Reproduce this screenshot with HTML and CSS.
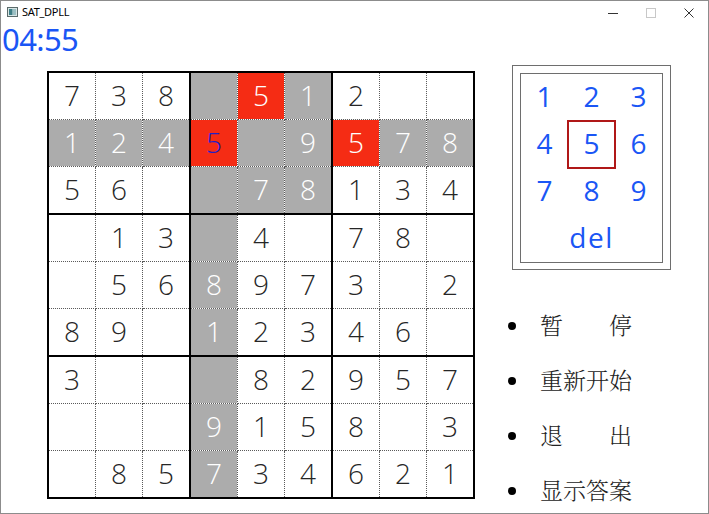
FILE: index.html
```html
<!DOCTYPE html>
<html lang="zh-CN">
<head>
<meta charset="utf-8">
<title>SAT_DPLL</title>
<link rel="stylesheet" href="styles.css">
</head>
<body>
<div class="window">
  <header class="titlebar">
    <div class="title">
      <svg class="app-icon" width="11" height="10" viewBox="0 0 11 10">
        <rect x="0.5" y="0.5" width="10" height="9" fill="#d8e6e6" stroke="#5a6a6a"/>
        <rect x="2" y="2" width="3.5" height="6" fill="#3f7f86"/>
        <rect x="6" y="2" width="3" height="6" fill="#9cc0c4"/>
      </svg>
      <span class="title-text">SAT_DPLL</span>
    </div>
    <div class="controls">
      <div class="ctl"><svg width="10" height="10" viewBox="0 0 10 10"><line x1="0" y1="5.5" x2="10" y2="5.5" stroke="#333" stroke-width="1"/></svg></div>
      <div class="ctl"><svg width="10" height="10" viewBox="0 0 10 10"><rect x="0.5" y="0.5" width="9" height="9" fill="none" stroke="#c8c8c8" stroke-width="1"/></svg></div>
      <div class="ctl"><svg width="10" height="10" viewBox="0 0 10 10"><path d="M0.5 0.5 L9.5 9.5 M9.5 0.5 L0.5 9.5" stroke="#333" stroke-width="1"/></svg></div>
    </div>
  </header>

  <div class="timer"><span class="timer-text">04:55</span></div>

  <main class="content">
    <div class="board">
      <div class="box">
        <div class="cell">7</div><div class="cell">3</div><div class="cell">8</div>
        <div class="cell hl">1</div><div class="cell hl">2</div><div class="cell hl">4</div>
        <div class="cell">5</div><div class="cell">6</div><div class="cell"></div>
      </div>
      <div class="box">
        <div class="cell hl"></div><div class="cell bad">5</div><div class="cell hl">1</div>
        <div class="cell bad sel">5</div><div class="cell hl"></div><div class="cell hl">9</div>
        <div class="cell hl"></div><div class="cell hl">7</div><div class="cell hl">8</div>
      </div>
      <div class="box">
        <div class="cell">2</div><div class="cell"></div><div class="cell"></div>
        <div class="cell bad">5</div><div class="cell hl">7</div><div class="cell hl">8</div>
        <div class="cell">1</div><div class="cell">3</div><div class="cell">4</div>
      </div>
      <div class="box">
        <div class="cell"></div><div class="cell">1</div><div class="cell">3</div>
        <div class="cell"></div><div class="cell">5</div><div class="cell">6</div>
        <div class="cell">8</div><div class="cell">9</div><div class="cell"></div>
      </div>
      <div class="box">
        <div class="cell hl"></div><div class="cell">4</div><div class="cell"></div>
        <div class="cell hl">8</div><div class="cell">9</div><div class="cell">7</div>
        <div class="cell hl">1</div><div class="cell">2</div><div class="cell">3</div>
      </div>
      <div class="box">
        <div class="cell">7</div><div class="cell">8</div><div class="cell"></div>
        <div class="cell">3</div><div class="cell"></div><div class="cell">2</div>
        <div class="cell">4</div><div class="cell">6</div><div class="cell"></div>
      </div>
      <div class="box">
        <div class="cell">3</div><div class="cell"></div><div class="cell"></div>
        <div class="cell"></div><div class="cell"></div><div class="cell"></div>
        <div class="cell"></div><div class="cell">8</div><div class="cell">5</div>
      </div>
      <div class="box">
        <div class="cell hl"></div><div class="cell">8</div><div class="cell">2</div>
        <div class="cell hl">9</div><div class="cell">1</div><div class="cell">5</div>
        <div class="cell hl">7</div><div class="cell">3</div><div class="cell">4</div>
      </div>
      <div class="box">
        <div class="cell">9</div><div class="cell">5</div><div class="cell">7</div>
        <div class="cell">8</div><div class="cell"></div><div class="cell">3</div>
        <div class="cell">6</div><div class="cell">2</div><div class="cell">1</div>
      </div>
    </div>

    <aside class="side">
      <div class="pad-frame">
        <div class="pad">
          <div class="key">1</div><div class="key">2</div><div class="key">3</div>
          <div class="key">4</div><div class="key picked">5</div><div class="key">6</div>
          <div class="key">7</div><div class="key">8</div><div class="key">9</div>
          <div class="key del">del</div>
        </div>
      </div>
      <ul class="menu">
        <li class="item"><span class="dot"></span><span class="label spread"><span>暂</span><span>停</span></span></li>
        <li class="item"><span class="dot"></span><span class="label">重新开始</span></li>
        <li class="item"><span class="dot"></span><span class="label spread"><span>退</span><span>出</span></span></li>
        <li class="item"><span class="dot"></span><span class="label">显示答案</span></li>
      </ul>
    </aside>
  </main>
</div>
</body>
</html>
```

FILE: styles.css
```css
html, body {
  margin: 0;
  padding: 0;
  background: #ffffff;
}

.window {
  width: 709px;
  height: 514px;
  box-sizing: border-box;
  border: 1px solid #8c8c8c;
  background: #ffffff;
  overflow: hidden;
  font-family: "Noto Sans", sans-serif;
}

.titlebar {
  height: 23px;
  display: flex;
  align-items: center;
  justify-content: space-between;
}

.title {
  display: flex;
  align-items: center;
  padding-left: 6px;
  gap: 4px;
  padding-bottom: 1px;
}

.app-icon {
  display: block;
}

.title-text {
  font-family: "Noto Sans", sans-serif;
  font-size: 11px;
  line-height: 12px;
  letter-spacing: -0.3px;
  color: #000;
}

.controls {
  display: flex;
  align-self: stretch;
}

.ctl {
  width: 38px;
  display: flex;
  align-items: center;
  justify-content: center;
  padding-top: 1px;
}

.ctl svg {
  display: block;
}

.timer {
  height: 30px;
  padding-left: 1px;
  display: flex;
  align-items: flex-end;
}

.timer-text {
  display: block;
  height: 24px;
  line-height: 24px;
  font-family: "Noto Sans", sans-serif;
  font-size: 31px;
  letter-spacing: -0.6px;
  color: #1a56f5;
  transform: translateY(-3px);
}

.content {
  display: flex;
  align-items: flex-start;
  margin-top: 11px;
  padding-left: 46px;
}

.board {
  margin-top: 6px;
  display: grid;
  grid-template-columns: repeat(3, 140px);
  grid-template-rows: repeat(3, 140px);
  gap: 2px;
  border: 2px solid #000;
  background: #000;
}

.box {
  display: grid;
  grid-template-columns: 47px 47px 46px;
  grid-template-rows: 47px 47px 46px;
  background: #ffffff;
}

.cell {
  box-sizing: border-box;
  display: flex;
  align-items: center;
  justify-content: center;
  padding-bottom: 2px;
  font-family: "Open Sans", "Noto Sans", sans-serif;
  font-weight: 350;
  font-size: 28px;
  color: #262626;
  background-clip: padding-box;
  border-right: 1px dotted #5a5a5a;
  border-bottom: 1px dotted #5a5a5a;
}

.cell:nth-child(3n) {
  border-right: none;
}

.cell:nth-child(n+7) {
  border-bottom: none;
}

.cell.hl {
  background-color: #acacac;
  color: #ffffff;
}

.cell.bad {
  background-color: #f52c14;
  color: #ffffff;
}

.cell.sel {
  color: #2020c8;
}

.side {
  margin-left: 33px;
  display: flex;
  flex-direction: column;
}

.pad-frame {
  margin-left: 4px;
  width: max-content;
  border: 1px solid #6e6e6e;
  padding: 7px 7px 6px 7px;
}

.pad {
  border: 1px solid #6e6e6e;
  display: grid;
  grid-template-columns: repeat(3, 47px);
  grid-template-rows: repeat(4, 47px);
}

.key {
  display: flex;
  align-items: center;
  justify-content: center;
  padding-bottom: 3px;
  font-family: "Open Sans", "Noto Sans", sans-serif;
  font-weight: 380;
  font-size: 28px;
  color: #1a56f5;
}

.key.picked {
  outline: 2px solid #b01818;
  outline-offset: -1px;
}

.key.del {
  grid-column: 1 / 4;
  letter-spacing: 1.5px;
}

.menu {
  list-style: none;
  margin: 27px 0 0 0;
  padding: 0;
}

.item {
  height: 55px;
  display: flex;
  align-items: center;
}

.dot {
  width: 8px;
  height: 8px;
  border-radius: 50%;
  background: #000;
  margin-right: 24px;
  margin-top: 2px;
}

.label {
  font-family: "Noto Serif CJK SC", "Noto Sans CJK SC", serif;
  font-size: 23px;
  font-weight: 300;
  color: #222;
  width: 92px;
  white-space: nowrap;
}

.label.spread {
  display: flex;
  justify-content: space-between;
}
```
